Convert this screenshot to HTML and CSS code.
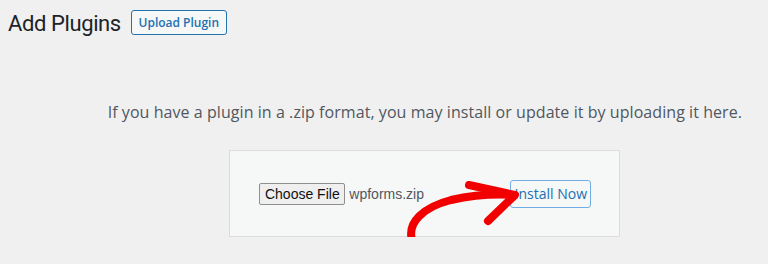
FILE: index.html
```html
<!DOCTYPE html>
<html>
<head>
    <meta charset="UTF-8">
    <title>Add Plugins</title>
    <link rel="stylesheet" href="styles.css">
</head>
<body>
    <div class="wrap">
        <div class="header">
            <h1>Add Plugins</h1>
            <button class="page-title-action">Upload Plugin</button>
        </div>
        <div class="upload-plugin">
            <div class="upload-inner">
                <p class="install-help">If you have a plugin in a .zip format, you may install or update it by uploading it here.</p>
                <form class="wp-upload-form">
                    <div class="file-field">
                        <button type="button" class="choose-file">Choose File</button>
                        <span class="file-name">wpforms.zip</span>
                    </div>
                    <button type="button" class="install-now">Install Now</button>
                </form>
            </div>
        </div>
    </div>

    <!-- annotation arrow drawn over the screenshot -->
    <svg class="arrow" width="768" height="264" viewBox="0 0 768 264">
        <path d="M412 240 C 407 222, 424 207, 451 200 C 474 195, 496 194, 513 195" fill="none" stroke="#f20000" stroke-width="8" stroke-linecap="round"/>
        <path d="M469 185 L 515 195 L 488 221" fill="none" stroke="#f20000" stroke-width="8" stroke-linecap="round" stroke-linejoin="round"/>
    </svg>
</body>
</html>
```

FILE: styles.css
```css
body {
    margin: 0;
    background-color: #f0f0f1;
    color: #3c434a;
    font-family: "Open Sans", sans-serif;
    overflow: hidden;
    position: relative;
}

.wrap {
    padding: 0 26px 0 8px;
}

.header {
    display: flex;
    align-items: center;
    gap: 10px;
    padding-top: 9px;
}

.header h1 {
    margin: 0;
    font-family: Roboto, sans-serif;
    font-size: 22px;
    letter-spacing: -0.4px;
    font-weight: 400;
    color: #1d2327;
    line-height: 29px;
}

.page-title-action {
    font-family: "Open Sans", sans-serif;
    font-size: 12px;
    font-weight: 600;
    color: #2271b1;
    background: #f6f7f7;
    border: 1px solid #2271b1;
    border-radius: 3px;
    padding: 0;
    white-space: nowrap;
    height: 25px;
    width: 96px;
    margin-top: -2px;
}

.upload-plugin {
    display: flex;
    justify-content: flex-end;
}

.upload-inner {
    display: flex;
    flex-direction: column;
    align-items: center;
}

.install-help {
    margin: 63px 0 0;
    font-size: 16px;
    letter-spacing: 0.06px;
    color: #50575e;
    line-height: 22px;
}

.wp-upload-form {
    margin-top: 27px;
    width: 391px;
    height: 87px;
    box-sizing: border-box;
    background: #f6f7f7;
    border: 1px solid #dcdcde;
    display: flex;
    align-items: center;
    padding: 0 28px 0 29px;
}

.file-field {
    display: flex;
    align-items: center;
    gap: 4px;
    flex: 1;
}

.choose-file {
    font-family: "Liberation Sans", Arial, sans-serif;
    font-size: 14px;
    color: #111;
    background: #efefef;
    border: 1px solid #8f8f8f;
    border-radius: 2px;
    height: 22px;
    width: 86px;
    padding: 0;
}

.file-name {
    font-family: "Liberation Sans", Arial, sans-serif;
    font-size: 14px;
    color: #50575e;
}

.install-now {
    font-family: "Open Sans", sans-serif;
    font-size: 14px;
    color: #2271b1;
    background: #f6f7f7;
    border: 1px solid #72aee6;
    border-radius: 3px;
    height: 28px;
    width: 81px;
    padding: 0;
}

.arrow {
    position: absolute;
    left: 0;
    top: 0;
    pointer-events: none;
}
```
